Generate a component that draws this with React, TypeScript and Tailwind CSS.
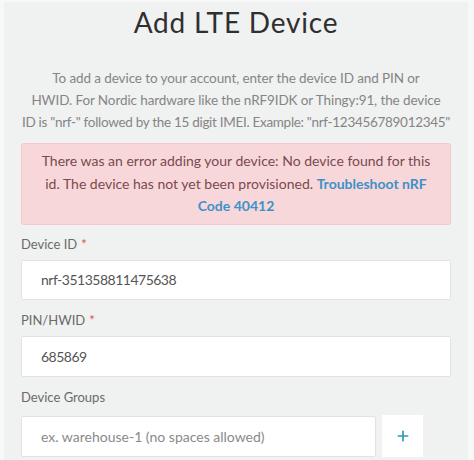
import { Plus } from 'lucide-react'

const font = { fontFamily: 'Lato, "Open Sans", sans-serif' }

function Label({ text, required }: { text: string; required?: boolean }) {
  return (
    <div className="text-[13px] leading-[18px] text-[#6b6b6b]">
      {text}
      {required && <span className="ml-1 text-[#d9534f]">*</span>}
    </div>
  )
}

export default function App() {
  return (
    <div className="h-[460px] w-[474px] overflow-hidden bg-[#f8f8f8] pl-[4px] pr-[6px] pt-[2px]" style={font}>
      <div className="h-full bg-[#f0f1f1] px-[17px]">
        {/* 타이틀 */}
        <h1 className="pt-[2px] text-center text-[28px] font-normal leading-[36px] tracking-[0.8px] text-[#2f2f2f]">
          Add LTE Device
        </h1>

        {/* 안내 문구 */}
        <p className="mt-[27px] whitespace-nowrap text-center text-[13.5px] leading-[22px] tracking-[-0.1px] text-[#858585]">
          To add a device to your account, enter the device ID and PIN or
          <br />
          HWID. For Nordic hardware like the nRF9IDK or Thingy:91, the device
          <br />
          <span className="tracking-[-0.3px]">
            ID is "nrf-" followed by the 15 digit IMEI. Example: "nrf-123456789012345"
          </span>
        </p>

        {/* 에러 박스 */}
        <div className="mt-[10px] rounded-[3px] border border-[#f5c6cb] bg-[#f8d7da] px-[16px] py-[6px] text-center text-[14px] leading-[22.5px] text-[#7a4a4e]">
          There was an error adding your device: No device found for this
          <br />
          id. The device has not yet been provisioned.{' '}
          <a href="#" className="font-bold text-[#3c92c8]">
            Troubleshoot nRF
            <br />
            Code 40412
          </a>
        </div>

        {/* 입력 필드 */}
        <div className="mt-[10px]">
          <Label text="Device ID" required />
          <input
            type="text"
            defaultValue="nrf-351358811475638"
            className="mt-[7px] block h-[40px] w-full rounded-[2px] border border-[#e2e2e2] bg-white px-[19px] text-[14px] tracking-[-0.5px] text-[#555] outline-none"
          />
        </div>

        <div className="mt-[11px]">
          <Label text="PIN/HWID" required />
          <input
            type="text"
            defaultValue="685869"
            className="mt-[7px] block h-[41px] w-full rounded-[2px] border border-[#e2e2e2] bg-white px-[19px] text-[14px] tracking-[-0.5px] text-[#555] outline-none"
          />
        </div>

        <div className="mt-[11px]">
          <Label text="Device Groups" />
          <div className="mt-[10px] flex gap-[6px]">
            <input
              type="text"
              placeholder="ex. warehouse-1 (no spaces allowed)"
              className="block h-[41px] w-[355px] rounded-[2px] border border-[#e2e2e2] bg-white px-[19px] text-[14px] text-[#555] outline-none placeholder:text-[#8a8a8a]"
            />
            <button type="button" className="-mt-px flex h-[42px] w-[41px] items-center justify-center bg-white text-[#2a98b8]">
              <Plus size={16} strokeWidth={2.5} />
            </button>
          </div>
        </div>
      </div>
    </div>
  )
}
